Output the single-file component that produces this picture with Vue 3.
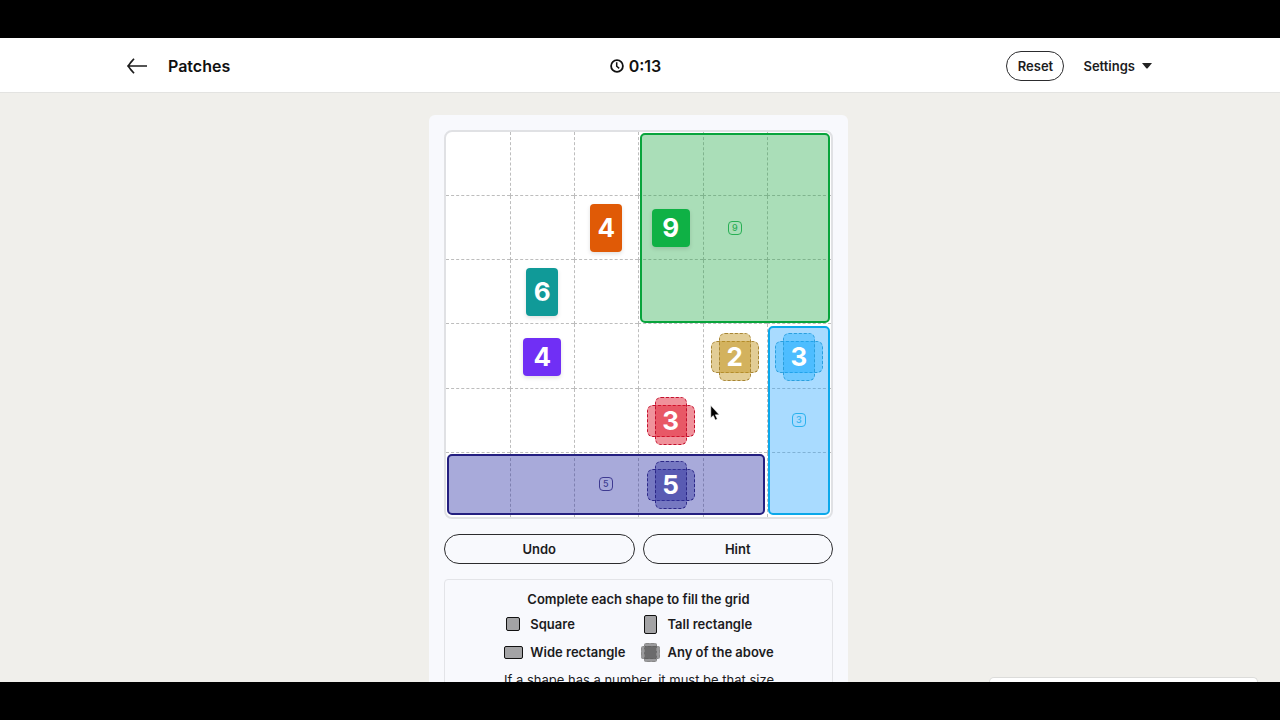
<script setup>
const cells = Array.from({ length: 36 }, (_, i) => i)

const patches = [
  { name: 'green', size: 9 },
  { name: 'sky', size: 3 },
  { name: 'indigo', size: 5 },
]

const clues = [
  { row: 2, col: 3, n: 4, shape: 'tall', color: 'orange' },
  { row: 2, col: 4, n: 9, shape: 'square', color: 'green' },
  { row: 3, col: 2, n: 6, shape: 'tall', color: 'teal' },
  { row: 4, col: 2, n: 4, shape: 'square', color: 'purple' },
  { row: 4, col: 5, n: 2, shape: 'any', color: 'gold' },
  { row: 4, col: 6, n: 3, shape: 'any', color: 'sky' },
  { row: 5, col: 4, n: 3, shape: 'any', color: 'red' },
  { row: 6, col: 4, n: 5, shape: 'any', color: 'indigo' },
]

const legend = [
  { shape: 'square', label: 'Square' },
  { shape: 'tall', label: 'Tall rectangle' },
  { shape: 'wide', label: 'Wide rectangle' },
  { shape: 'any', label: 'Any of the above' },
]
</script>

<template>
  <div class="screen">
    <div class="viewport">
      <header class="topbar">
        <div class="brand">
          <a href="#" class="back" aria-label="Back">
            <svg width="20" height="16" viewBox="0 0 20 16" fill="none" stroke="#1c1c1c" stroke-width="1.7">
              <path d="M20 8H1.4M7 .8 3.4 4.9Q2 6.8 1 8q1 1.200 2.400 3.100L7 15.200" />
            </svg>
          </a>
          <h1>Patches</h1>
        </div>
        <div class="timer">
          <svg width="14" height="14" viewBox="0 0 14 14" fill="none" stroke="#111" stroke-width="1.8">
            <circle cx="7" cy="7" r="5.900" />
            <path d="M6.700 3.300V7.200L9.200 9.400" stroke-width="1.500" />
          </svg>
          <span>0:13</span>
        </div>
        <div class="actions">
          <button class="pill reset" type="button">Reset</button>
          <button class="settings" type="button">
            Settings
            <svg width="10" height="6" viewBox="0 0 10 6"><path d="M0 0h10L5.700 5.200q-.7.700-1.400 0z" fill="#222" /></svg>
          </button>
        </div>
      </header>

      <main class="stage">
        <section class="panel">
          <div class="board">
            <div class="layer">
              <div v-for="c in cells" :key="c" class="cell"></div>
            </div>
            <div class="layer over">
              <div v-for="p in patches" :key="p.name" class="patch" :class="'patch-' + p.name">
                <span class="count">{{ p.size }}</span>
              </div>
            </div>
            <div class="layer over">
              <div
                v-for="(c, i) in clues"
                :key="i"
                class="clue"
                :class="[c.shape, c.color]"
                :style="{ gridRow: c.row, gridColumn: c.col }"
              >
                <template v-if="c.shape === 'any'">
                  <i class="block wide-block"></i>
                  <i class="block tall-block"></i>
                </template>
                <i v-else class="block"></i>
                <b>{{ c.n }}</b>
              </div>
            </div>
            <svg class="cursor" width="10" height="16" viewBox="0 0 10 16">
              <path d="M.8.6v12.200l2.500-2.300 2 4.500 2-.9-2-4.300H9.200z" fill="#000" stroke="#fff" stroke-width=".5" />
            </svg>
          </div>

          <div class="controls">
            <button class="pill" type="button">Undo</button>
            <button class="pill" type="button">Hint</button>
          </div>

          <section class="rules">
            <h2>Complete each shape to fill the grid</h2>
            <ul>
              <li v-for="l in legend" :key="l.shape">
                <span class="key"><i :class="'key-' + l.shape"></i></span>
                {{ l.label }}
              </li>
            </ul>
            <p>If a shape has a number, it must be that size.</p>
          </section>
        </section>
      </main>
      <aside class="dock"></aside>
    </div>
  </div>
</template>

<style>
body { margin: 0; background: #000; }
</style>

<style scoped>
* { box-sizing: border-box; }
.screen {
  height: 100vh;
  padding: 38px 0;
  background: #000;
  font-family: Inter, "Liberation Sans", sans-serif;
  font-size: 13px;
  color: #1c1c1e;
}
.viewport {
  position: relative;
  height: 100%;
  overflow: hidden;
  background: #f0efeb;
}
.topbar {
  display: grid;
  grid-template-columns: 1fr auto 1fr;
  align-items: center;
  height: 55px;
  padding: 2px 128px 0 127px;
  background: #fff;
  border-bottom: 1px solid #e3e3e1;
}
.brand { display: flex; align-items: center; gap: 21px; }
.back { display: flex; }
h1 { margin: 0; font-size: 16px; line-height: 24px; font-weight: 600; color: #111; }
.timer { display: flex; align-items: center; gap: 5px; font-size: 16px; font-weight: 600; color: #111; margin-right: 8px; }
.actions { display: flex; align-items: center; justify-content: flex-end; gap: 19px; }
button { font: inherit; font-weight: 600; color: inherit; background: transparent; padding: 0; }
.pill { height: 30px; border: 1px solid #2c2c2e; border-radius: 15px; }
.reset { width: 58px; }
.settings { display: flex; align-items: center; gap: 7px; border: 0; }
.stage { display: flex; justify-content: center; padding: 22px 3px 0 0; }
.panel {
  width: 419px;
  padding: 15px;
  background: #f8f9fd;
  border-radius: 6px 6px 0 0;
}
.board {
  position: relative;
  aspect-ratio: 1;
  border: 2px solid #e0e1e4;
  border-radius: 8px;
  background: #fff;
}
.layer {
  display: grid;
  grid-template: repeat(6, 1fr) / repeat(6, 1fr);
  height: 100%;
}
.over { position: absolute; inset: 0; }
.cell { border: 0 dashed #bdbdbd; border-width: 0 0 1px 1px; }
.cell:nth-child(6n + 1) { border-left-width: 0; }
.cell:nth-child(n + 31) { border-bottom-width: 0; }
.patch {
  display: flex;
  align-items: center;
  justify-content: center;
  margin: 1px 1px 2px 1px;
  border: 2px solid;
  border-radius: 5px;
}
.patch-green { grid-area: 1 / 4 / 4 / 7; color: #08a43c; background: rgba(24, 166, 62, .37); }
.patch-sky { grid-area: 4 / 6 / 7 / 7; color: #0ba8ea; background: rgba(30, 160, 255, .38); }
.patch-indigo { grid-area: 6 / 1 / 7 / 6; margin-right: 2px; color: #241f80; background: rgba(31, 36, 160, .39); }
.count {
  width: 14px;
  height: 14px;
  border: 1px solid;
  border-radius: 4px;
  font-size: 9px;
  line-height: 12px;
  font-weight: 500;
  text-align: center;
  opacity: .8;
}
.clue { display: grid; place-items: center; }
.clue > * { grid-area: 1 / 1; }
.clue b { position: relative; font-size: 26px; line-height: 32px; font-weight: 700; color: #fff; }
.block { background: var(--c); border-radius: 4px; box-shadow: 0 2px 4px rgba(0, 0, 0, .12); }
.tall .block { width: 32px; height: 48px; }
.square .block { width: 38px; height: 38px; }
.any .block { border: 1px dashed var(--line); border-radius: 6px; box-shadow: none; }
.any .wide-block { width: 48px; height: 32px; }
.any .tall-block { width: 32px; height: 48px; }
.orange { --c: #e05a06; }
.green { --c: #0fb145; }
.teal { --c: #109a98; }
.purple { --c: #702ff5; }
.gold { --c: rgba(193, 148, 31, .47); --line: #a78534; }
.red { --c: rgba(224, 24, 42, .47); --line: #c20f2c; }
.any.sky { --c: rgba(20, 172, 255, .38); --line: #2b9fdd; }
.any.indigo { --c: rgba(50, 52, 160, .42); --line: #2b2787; }
.cursor { position: absolute; left: 68.500%; top: 71%; }
.controls { display: grid; grid-template-columns: 1fr 1fr; gap: 8px; margin-top: 15px; }
.rules {
  margin-top: 15px;
  padding: 9px 16px 16px;
  border: 1px solid #e3e4e8;
  border-radius: 4px;
}
h2 { margin: 0; font-size: 13px; line-height: 20px; font-weight: 600; text-align: center; }
ul {
  display: grid;
  grid-template-columns: auto auto;
  justify-content: center;
  gap: 8px 15px;
  margin: 5px 0 8px;
  padding: 0;
  list-style: none;
  font-weight: 600;
}
li { display: flex; align-items: center; gap: 7px; line-height: 20px; }
.key { display: grid; place-items: center; width: 20px; height: 20px; }
.key i { border: 1px solid #111; border-radius: 2px; background: #a3a3a5; }
.key .key-square { width: 14px; height: 14px; }
.key .key-tall { width: 13px; height: 19px; }
.key .key-wide { width: 19px; height: 13px; }
.key .key-any { position: relative; width: 19px; height: 13px; border: 1px dashed #888; background: rgba(60, 60, 60, .5); }
.key-any::after {
  content: "";
  position: absolute;
  inset: -4px 2px;
  border: 1px dashed #888;
  border-radius: 2px;
  background: rgba(60, 60, 60, .5);
}
p { margin: 0 0 0 43px; line-height: 20px; white-space: nowrap; }
.dock {
  position: absolute;
  right: 22px;
  bottom: 0;
  width: 269px;
  height: 5px;
  background: #fff;
  border: 1px solid #dcdcda;
  border-bottom: 0;
  border-radius: 6px 6px 0 0;
}
</style>
